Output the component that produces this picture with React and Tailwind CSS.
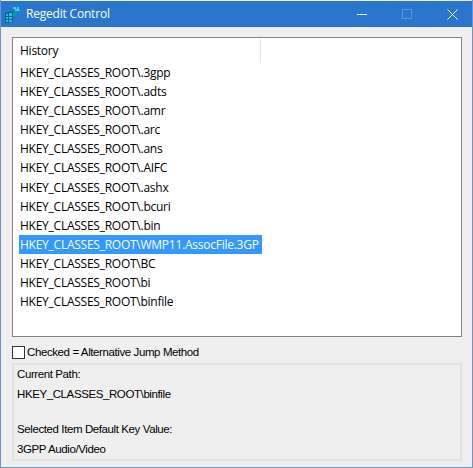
const history = [
  "HKEY_CLASSES_ROOT\\.3gpp",
  "HKEY_CLASSES_ROOT\\.adts",
  "HKEY_CLASSES_ROOT\\.amr",
  "HKEY_CLASSES_ROOT\\.arc",
  "HKEY_CLASSES_ROOT\\.ans",
  "HKEY_CLASSES_ROOT\\.AIFC",
  "HKEY_CLASSES_ROOT\\.ashx",
  "HKEY_CLASSES_ROOT\\.bcuri",
  "HKEY_CLASSES_ROOT\\.bin",
  "HKEY_CLASSES_ROOT\\WMP11.AssocFile.3GP",
  "HKEY_CLASSES_ROOT\\BC",
  "HKEY_CLASSES_ROOT\\bi",
  "HKEY_CLASSES_ROOT\\binfile",
];

function AppIcon() {
  return (
    <svg width="20" height="20" viewBox="0 0 20 20" className="ml-[1px] shrink-0">
      <path d="M3 9l8-2v11l-8 1z" fill="#0b5f86" />
      <path d="M4 10h2v2H4zM7 9h3v3H7zM4 13h2v2H4zM7 13h3v2H7zM4 16h2v2H4zM7 16h3v2H7z" fill="#1fc4dc" />
      <path d="M11 9l3-2 2 2-2 3-3 2z" fill="#0f93b0" />
      <path d="M11 3h3v2h-3zM15 3h2v2h-2zM13 5h4v2h-4zM17 6h1v1h-1z" fill="#2fd8e6" />
    </svg>
  );
}

export default function App() {
  return (
    <div className="w-[473px] h-[468px] bg-[#efefef] border-x border-b border-[#6f94cc] border-t-0 flex flex-col overflow-hidden font-['Liberation_Sans',sans-serif]">
      {/* Title bar */}
      <div className="h-[26px] mt-px bg-[#2a76cc] flex items-center shrink-0 text-white">
        <AppIcon />
        <span className="ml-[4px] text-[12px] tracking-[-0.2px] font-['Open_Sans',sans-serif] leading-none">Regedit Control</span>
        <div className="ml-auto flex items-center">
          <div className="w-[10px] h-px bg-white mr-[35px]" />
          <div className="w-[10px] h-[10px] border border-[#5a97dc] mr-[35px]" />
          <svg width="11" height="11" viewBox="0 0 11 11" className="mr-[14px]">
            <path d="M0.5 0.5l10 10M10.5 0.5l-10 10" stroke="#fff" strokeWidth="1" />
          </svg>
        </div>
      </div>

      {/* History list */}
      <div className="mt-[10px] ml-[11px] w-[450px] h-[300px] bg-white border border-[#82828c] font-['Open_Sans',sans-serif] text-[12px] text-black tracking-[-0.25px] shrink-0">
        <div className="relative h-[25px] pl-[7px] flex items-center">
          History
          <div className="absolute left-[247px] top-[1px] h-[24px] w-px bg-[#e5e5e5]" />
        </div>
        <ul className="ml-[6px]">
          {history.map((item, idx) => (
            <li
              key={idx}
              className={
                "h-[19.1px] leading-[19px] w-[243px] pl-[1px] " +
                (idx === 9 ? "bg-[#3399ff] text-white" : "")
              }
            >
              {item}
            </li>
          ))}
        </ul>
      </div>

      {/* Checkbox */}
      <div className="mt-[9px] ml-[11px] flex items-center text-[11.5px] text-black h-[13px] shrink-0">
        <div className="w-[13px] h-[13px] bg-white border border-[#333]" />
        <span className="ml-[2px] tracking-[-0.4px]">Checked = Alternative Jump Method</span>
      </div>

      {/* Details */}
      <div className="mt-[4px] ml-[11px] w-[450px] h-[98px] border-2 border-[#e1e1e1] pl-[3px] text-[11.5px] text-black tracking-[-0.4px]">
        <p className="leading-[20px] -mt-px">Current Path:</p>
        <p className="leading-[20px]">HKEY_CLASSES_ROOT\binfile</p>
        <p className="leading-[20px] mt-[15px]">Selected Item Default Key Value:</p>
        <p className="leading-[20px]">3GPP Audio/Video</p>
      </div>
    </div>
  );
}
